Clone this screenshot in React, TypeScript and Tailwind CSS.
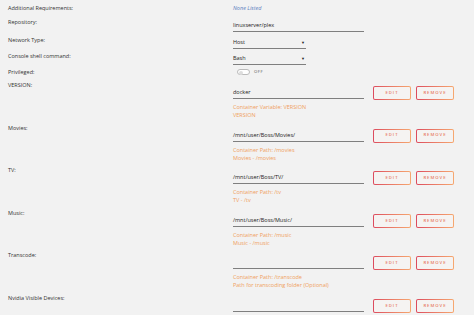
import React from "react";

const font = { fontFamily: '"Open Sans", "Noto Sans", sans-serif' };

function Btn({ label }: { label: string }) {
  return (
    <div className="h-[14px] w-[38px] rounded-[2px] bg-gradient-to-r from-[#dc4a5e] to-[#f6a870] p-px">
      <div className="flex h-full w-full items-center justify-center rounded-[1px] bg-[#f5f3f2] text-[4.2px] font-semibold tracking-[1px] text-[#e77a62]">
        {label}
      </div>
    </div>
  );
}

function Underline({ children, w = "w-[131px]" }: { children?: React.ReactNode; w?: string }) {
  return (
    <div className={`${w} flex h-[14px] items-end border-b-[1.5px] border-[#7f7f7f] pb-[2px] text-[5.5px] leading-[7px] text-[#222]`}>
      {children}
    </div>
  );
}

function Select({ value }: { value: string }) {
  return (
    <div className="flex h-[13px] w-[73px] items-end justify-between border-b-[1.5px] border-[#7f7f7f] pb-[2px] text-[5.5px] leading-[7px] text-[#222]">
      <span>{value}</span>
      <span className="mr-[1px] text-[4px]">▼</span>
    </div>
  );
}

const labelCls = "w-[225px] text-[5.5px] leading-[7px] text-[#333]";

function PathRow({ label, value, l1, l2 }: { label: string; value: string; l1: string; l2: string }) {
  return (
    <div className="flex h-[42.6px]">
      <div className={`${labelCls} pt-[1px]`}>{label}</div>
      <div className="flex flex-col">
        <div className="flex items-start">
          <div className="pt-[4px]">
            <Underline>{value}</Underline>
          </div>
          <div className="ml-[9px] mt-[5px] flex gap-[5px]">
            <Btn label="EDIT" />
            <Btn label="REMOVE" />
          </div>
        </div>
        <div className="mt-[3px] text-[5.5px] leading-[8px] text-[#f0a060]">
          <div>{l1}</div>
          <div>{l2}</div>
        </div>
      </div>
    </div>
  );
}

export default function App() {
  return (
    <div className="h-[315px] w-[474px] overflow-hidden bg-[#f2f2f2] pl-[8px] pt-[4px]" style={font}>
      <div className="flex h-[14px]">
        <div className={`${labelCls} pt-[1px]`}>Additional Requirements:</div>
        <div className="pt-[1px] text-[5.5px] italic leading-[7px] text-[#5b7fbf]">None Listed</div>
      </div>
      <div className="flex h-[16px]">
        <div className={`${labelCls} pt-[1px]`}>Repository:</div>
        <Underline>linuxserver/plex</Underline>
      </div>
      <div className="flex h-[16px]">
        <div className={`${labelCls} pt-[3px]`}>Network Type:</div>
        <div className="pt-[2px]">
          <Select value="Host" />
        </div>
      </div>
      <div className="flex h-[16px]">
        <div className={`${labelCls} pt-[3px]`}>Console shell command:</div>
        <div className="pt-[2px]">
          <Select value="Bash" />
        </div>
      </div>
      <div className="flex h-[15px]">
        <div className={`${labelCls} pt-[3px]`}>Privileged:</div>
        <div className="flex items-center gap-[4px] self-start pl-[4px] pt-[3px]">
          <div className="h-[6px] w-[13px] rounded-[3px] border-[0.8px] border-[#bbb] bg-white p-[0.5px]">
            <div className="h-[4px] w-[4px] rounded-full bg-[#ddd]" />
          </div>
          <span className="text-[4.2px] tracking-[0.6px] text-[#555]">OFF</span>
        </div>
      </div>
      <PathRow label="VERSION:" value="docker" l1="Container Variable: VERSION" l2="VERSION" />
      <PathRow label="Movies:" value="/mnt/user/Boss/Movies/" l1="Container Path: /movies" l2="Movies - /movies" />
      <PathRow label="TV:" value="/mnt/user/Boss/TV/" l1="Container Path: /tv" l2="TV - /tv" />
      <PathRow label="Music:" value="/mnt/user/Boss/Music/" l1="Container Path: /music" l2="Music - /music" />
      <PathRow label="Transcode:" value="" l1="Container Path: /transcode" l2="Path for transcoding folder (Optional)" />
      <PathRow label="Nvidia Visible Devices:" value="" l1="" l2="" />
    </div>
  );
}
